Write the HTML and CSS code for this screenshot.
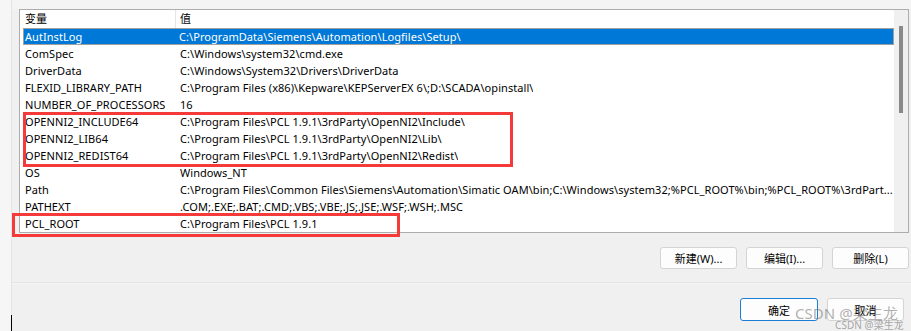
FILE: index.html
```html
<!DOCTYPE html>
<html lang="zh-CN">
<head>
    <meta charset="UTF-8">
    <title>环境变量</title>
    <link rel="stylesheet" href="styles.css">
</head>
<body>
    <div class="page">
        <div class="edge"><span class="caret"></span></div>
        <div class="dialog">
            <!-- 系统变量列表 -->
            <div class="vars">
                <div class="listbox">
                    <div class="table">
                        <div class="head">
                            <div class="col-name">变量</div>
                            <div class="col-value">值</div>
                        </div>
                        <div class="row selected"><div class="col-name">AutInstLog</div><div class="col-value">C:\ProgramData\Siemens\Automation\Logfiles\Setup\</div></div>
                        <div class="row"><div class="col-name">ComSpec</div><div class="col-value">C:\Windows\system32\cmd.exe</div></div>
                        <div class="row"><div class="col-name">DriverData</div><div class="col-value">C:\Windows\System32\Drivers\DriverData</div></div>
                        <div class="row"><div class="col-name">FLEXID_LIBRARY_PATH</div><div class="col-value">C:\Program Files (x86)\Kepware\KEPServerEX 6\;D:\SCADA\opinstall\</div></div>
                        <div class="row"><div class="col-name">NUMBER_OF_PROCESSORS</div><div class="col-value">16</div></div>
                        <div class="row"><div class="col-name">OPENNI2_INCLUDE64</div><div class="col-value">C:\Program Files\PCL 1.9.1\3rdParty\OpenNI2\Include\</div></div>
                        <div class="row"><div class="col-name">OPENNI2_LIB64</div><div class="col-value">C:\Program Files\PCL 1.9.1\3rdParty\OpenNI2\Lib\</div></div>
                        <div class="row"><div class="col-name">OPENNI2_REDIST64</div><div class="col-value">C:\Program Files\PCL 1.9.1\3rdParty\OpenNI2\Redist\</div></div>
                        <div class="row"><div class="col-name">OS</div><div class="col-value">Windows_NT</div></div>
                        <div class="row"><div class="col-name">Path</div><div class="col-value">C:\Program Files\Common Files\Siemens\Automation\Simatic OAM\bin;C:\Windows\system32;%PCL_ROOT%\bin;%PCL_ROOT%\3rdPart...</div></div>
                        <div class="row"><div class="col-name">PATHEXT</div><div class="col-value">.COM;.EXE;.BAT;.CMD;.VBS;.VBE;.JS;.JSE;.WSF;.WSH;.MSC</div></div>
                        <div class="row"><div class="col-name">PCL_ROOT</div><div class="col-value">C:\Program Files\PCL 1.9.1</div></div>
                    </div>
                    <div class="scrollbar"><div class="thumb"></div></div>
                </div>
            </div>

            <div class="actions">
                <button>新建(W)...</button>
                <button>编辑(I)...</button>
                <button>删除(L)</button>
            </div>

            <div class="separator"></div>

            <div class="footer">
                <button class="primary">确定</button>
                <button>取消</button>
            </div>
        </div>

        <!-- 标注框 -->
        <div class="mark mark-openni"></div>
        <div class="mark mark-pcl"></div>
        <div class="watermark">CSDN @梁生龙</div>
        <div class="watermark small">CSDN @梁生龙</div>
    </div>
</body>
</html>
```

FILE: styles.css
```css
body {
    margin: 0;
    background-color: #f0f0f0;
    font-family: 'Noto Sans', 'Noto Sans CJK SC', sans-serif;
    font-size: 11px;
    letter-spacing: 0.06px;
    color: #000;
}

.page {
    position: relative;
    display: flex;
    width: 911px;
    height: 331px;
    overflow: hidden;
}

.edge {
    position: relative;
    flex-shrink: 0;
    width: 11px;
    background: #f6f6f6;
    border-right: 1px solid #e4e4e4;
}

.caret {
    position: absolute;
    left: 11px;
    top: 315px;
    width: 1px;
    height: 16px;
    background: #000;
}

.dialog {
    flex: 1;
    min-width: 0;
    display: flex;
    flex-direction: column;
}

.vars {
    padding: 9px 2px 0 7px;
    background: linear-gradient(#f4f4f4 9px, #f0f0f0 9px);
}

.listbox {
    display: flex;
    height: 222px;
    border: 1px solid #adadad;
    background: white;
    overflow: hidden;
}

.table {
    flex: 1;
    min-width: 0;
}

.head {
    display: flex;
    height: 18px;
    line-height: 18px;
    padding-left: 3px;
}

.head .col-name {
    border-right: 1px solid #e5e5e5;
    width: 150px;
}

.head .col-value {
    padding-left: 4px;
}

.row {
    display: flex;
    height: 17px;
    line-height: 18px;
    margin-left: 3px;
    box-sizing: border-box;
    white-space: nowrap;
}

.col-name {
    width: 153px;
    padding-left: 2px;
    flex-shrink: 0;
}

.col-value {
    padding-left: 2px;
    overflow: hidden;
}

.row.selected {
    background: #0078d7;
    color: white;
    border: 1px solid #a0a0a0;
    line-height: 16px;
}

.row.selected .col-name {
    width: 152px;
    padding-left: 1px;
}

.scrollbar {
    flex-shrink: 0;
    width: 14px;
    background: #f0f0f0;
    position: relative;
}

.thumb {
    position: absolute;
    left: 5px;
    top: 16px;
    width: 4px;
    height: 87px;
    background: #8a8a8a;
}

.actions {
    display: flex;
    justify-content: flex-end;
    gap: 9px;
    padding: 14px 2px 0 0;
}

button {
    font-family: inherit;
    font-size: 11px;
    width: 77px;
    height: 22px;
    padding: 0;
    background: #fdfdfd;
    border: 1px solid #d4d4d4;
    border-radius: 3px;
    color: #000;
}

.separator {
    margin-top: 13px;
    height: 1px;
    background: #e2e2e2;
    border-bottom: 1px solid #f6f6f6;
}

.footer {
    display: flex;
    justify-content: flex-end;
    gap: 9px;
    padding: 14px 7px 0 0;
}

.footer button {
    height: 23px;
}

.footer .primary {
    width: 78px;
    border: 1px solid #1a7fd4;
}

.mark {
    position: absolute;
    border: 3px solid #f53a3a;
}

.mark-openni {
    left: 23px;
    top: 112px;
    width: 484px;
    height: 49px;
}

.mark-pcl {
    left: 12px;
    top: 213px;
    width: 382px;
    height: 18px;
}

.watermark {
    position: absolute;
    left: 795px;
    top: 302px;
    font-size: 15px;
    color: rgba(110, 110, 110, 0.55);
}

.watermark.small {
    left: 835px;
    top: 317px;
    font-size: 10px;
    color: rgba(120, 120, 120, 0.65);
}
```
